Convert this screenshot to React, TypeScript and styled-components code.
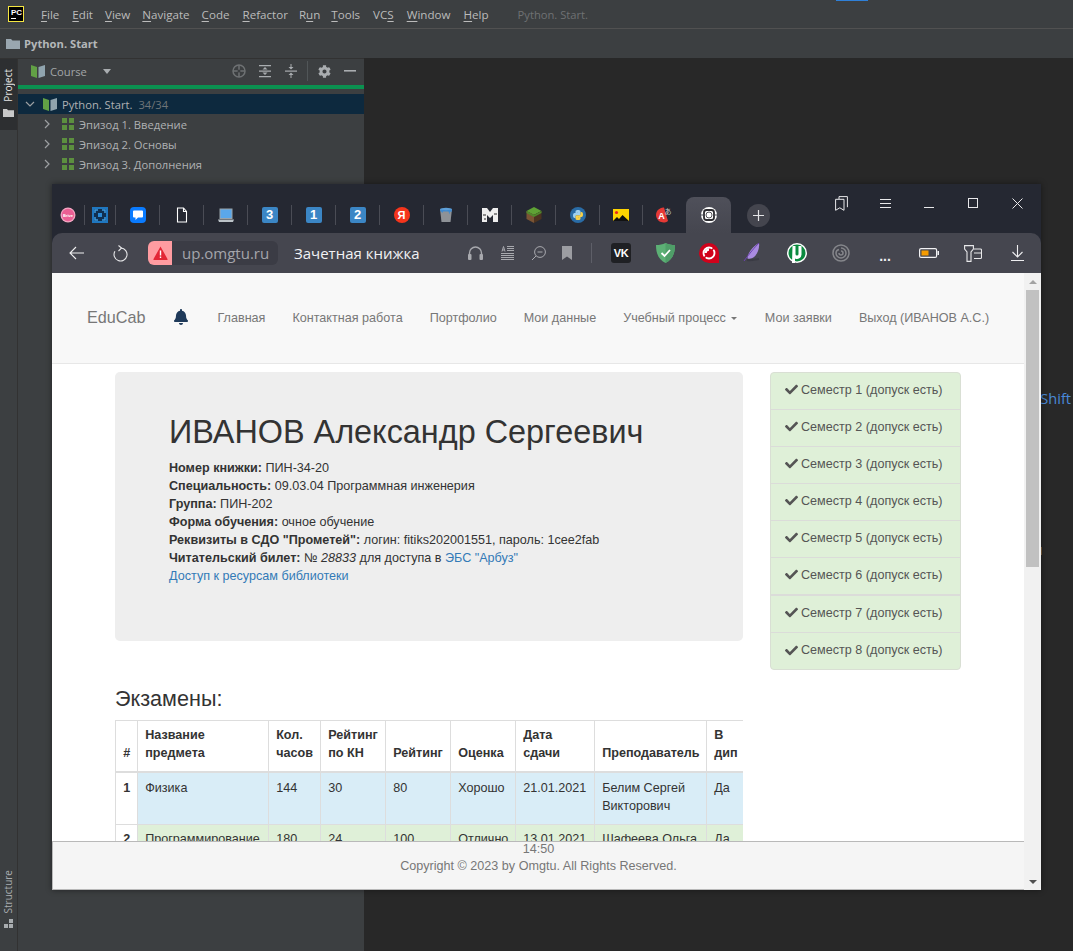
import React from 'react'
import styled, { createGlobalStyle } from 'styled-components'
import { FaBell, FaCheck, FaCog } from 'react-icons/fa'

const Global = createGlobalStyle`
  html, body { margin: 0; padding: 0; background: #2b2b2b; overflow: hidden; }
  * { box-sizing: border-box; }
`

/* ---------- IDE ---------- */
const Desktop = styled.div`
  position: relative;
  width: 1073px;
  height: 951px;
  overflow: hidden;
  display: flex;
  flex-direction: column;
  background: #3c3f41;
  font-family: 'Open Sans', 'Noto Sans', sans-serif;
  color: #bbbbbb;
`
const MenuBar = styled.div`
  position: relative;
  height: 29px;
  flex: none;
  display: flex;
  align-items: center;
  padding-left: 8px;
  border-bottom: 1px solid #515151;
  font-size: 11.6px;
`
const TopAccent = styled.div`
  position: absolute;
  left: 836px;
  top: 0;
  width: 32px;
  height: 1px;
  background: #2f80d8;
`
const PcLogo = styled.div`
  width: 16px;
  height: 16px;
  margin-right: 17px;
  border: 1px solid #f5e642;
  background: #000;
  color: #fff;
  font: 700 8px/9px 'Liberation Sans', sans-serif;
  padding: 1px 0 0 2px;
  &::after {
    content: '';
    display: block;
    width: 5px;
    height: 1px;
    margin-top: 1px;
    background: #fff;
  }
`
const MenuItem = styled.span`
  margin-right: ${(p: { $gap: number }) => p.$gap}px;
  u { text-underline-offset: 2px; }
`
const MenuTitle = styled.span`
  margin-left: 17px;
  font-size: 11.2px;
  color: #6f7173;
`
const NavBar = styled.div`
  height: 29px;
  flex: none;
  display: flex;
  align-items: center;
  gap: 4px;
  padding-left: 6px;
  font-size: 11.2px;
  font-weight: 700;
  color: #b4b7b9;
`
const Workspace = styled.div`
  flex: 1;
  display: flex;
  min-height: 0;
`
const Strip = styled.div`
  width: 18px;
  flex: none;
  display: flex;
  flex-direction: column;
  align-items: stretch;
  border-right: 1px solid #323232;
  border-top: 1px solid #323232;
`
const StripTab = styled.div`
  height: ${(p: { $active?: boolean }) => (p.$active ? '71px' : 'auto')};
  margin-top: ${(p: { $active?: boolean }) => (p.$active ? '0' : 'auto')};
  padding: ${(p: { $active?: boolean }) => (p.$active ? '10px 0 0' : '0 0 22px')};
  background: ${(p: { $active?: boolean }) => (p.$active ? '#2d2f31' : 'transparent')};
  color: ${(p: { $active?: boolean }) => (p.$active ? '#e6e6e6' : '#a9adb0')};
  display: flex;
  flex-direction: column;
  align-items: center;
  gap: 6px;
  font-size: 10px;
  line-height: 17px;
`
const VerticalText = styled.span`
  writing-mode: vertical-rl;
  transform: rotate(180deg);
`
const Panel = styled.div`
  width: 346px;
  flex: none;
  display: flex;
  flex-direction: column;
  font-size: 11.2px;
`
const PanelHead = styled.div`
  height: 27px;
  flex: none;
  display: flex;
  align-items: center;
  padding: 0 1px 2px 13px;
  border-top: 1px solid #323232;
  color: #a3a6a8;
`
const PanelLabel = styled.span`
  margin-left: 5px;
`
const Caret = styled.span`
  width: 0;
  height: 0;
  margin-left: 16px;
  margin-right: auto;
  border-left: 4.5px solid transparent;
  border-right: 4.5px solid transparent;
  border-top: 5px solid #a9adb0;
`
const ToolIcon = styled.span`
  width: 26px;
  display: flex;
  justify-content: center;
  color: #a9adb0;
`
const ToolDivider = styled.span`
  width: 1px;
  height: 20px;
  margin: 0 3px;
  background: #515658;
`
const ProgressLine = styled.div`
  height: 4px;
  flex: none;
  background: #0b9150;
  margin-bottom: 5px;
`
const TreeRow = styled.div<{ $selected?: boolean; $level: number }>`
  height: 20px;
  flex: none;
  display: flex;
  align-items: center;
  padding-left: ${(p) => (p.$level ? 24 : 7)}px;
  gap: 5px;
  background: ${(p) => (p.$selected ? '#0d293e' : 'transparent')};
  color: #afb1b3;
`
const ChevronSlot = styled.span<{ $w: number }>`
  width: ${(p) => p.$w}px;
  flex: none;
`
const TreeCount = styled.span`
  margin-left: 1px;
  color: #6f7578;
`
const Editor = styled.div`
  flex: 1;
  display: flex;
  flex-direction: column;
  align-items: flex-end;
  background: #282828;
  padding: 331px 2px 0 0;
  font-size: 14.6px;
  line-height: 19px;
  color: #4a88d8;
`
const EditorMark = styled.span`
  width: 1px;
  height: 8px;
  margin: 139px 29px 0 0;
  background: #7a5c3a;
`

/* ---------- browser window ---------- */
const Browser = styled.div`
  position: absolute;
  left: 52px;
  top: 184px;
  width: 989px;
  height: 706px;
  display: flex;
  flex-direction: column;
  background: #252832;
  box-shadow: 0 0 6px rgba(0, 0, 0, 0.45);
`
const TabBar = styled.div`
  height: 49px;
  flex: none;
  display: flex;
  align-items: flex-end;
`
const TabRow = styled.div`
  height: 36px;
  display: flex;
  align-items: center;
`
const Tab = styled.div<{ $w?: number; $active?: boolean }>`
  position: relative;
  width: ${(p) => p.$w ?? 43}px;
  height: 36px;
  display: flex;
  align-items: center;
  justify-content: center;
  background: ${(p) => (p.$active ? 'linear-gradient(#4f505a, #45464f)' : 'transparent')};
  border-radius: ${(p) => (p.$active ? '8px 8px 0 0' : '0')};
`
const TabSep = styled.span`
  width: 1px;
  height: 20px;
  background: #4a4c55;
`
const TabGap = styled.span`
  width: 1px;
`
const NewTab = styled.div`
  width: 23px;
  height: 23px;
  margin-left: 16px;
  border-radius: 50%;
  background: #44454e;
  color: #e4e4e6;
  display: flex;
  align-items: center;
  justify-content: center;
`
const WindowControls = styled.div`
  margin-left: auto;
  margin-right: 2px;
  align-self: flex-start;
  height: 38px;
  display: flex;
  align-items: center;
`
const WinButton = styled.div`
  width: 44px;
  display: flex;
  justify-content: center;
  color: #e8e8ea;
`
const AddressBar = styled.div`
  height: 40px;
  flex: none;
  display: flex;
  align-items: center;
  padding: 0 2px;
  background: #45464f;
  border-radius: 10px 10px 0 0;
  color: #f0f0f2;
`
const ToolButton = styled.div<{ $w?: number }>`
  width: ${(p) => p.$w ?? 44}px;
  flex: none;
  display: flex;
  align-items: center;
  justify-content: center;
`
const WarnTile = styled.div`
  width: 24px;
  height: 24px;
  margin-left: 6px;
  flex: none;
  display: flex;
  align-items: center;
  justify-content: center;
  background: #ff9ca1;
  border-radius: 6px 0 0 6px;
`
const DomainPill = styled.div`
  width: 106px;
  height: 24px;
  padding-left: 10px;
  flex: none;
  background: #3b3c45;
  border-radius: 0 6px 6px 0;
  color: #a4a5ab;
  font: 15px/24px 'Open Sans', sans-serif;
`
const PageTitle = styled.div`
  margin-left: 16px;
  margin-right: auto;
  font: 15px/24px 'Open Sans', sans-serif;
  color: #f2f2f4;
`
const AddrSep = styled.span`
  width: 1px;
  height: 20px;
  margin: 0 7px 0 11px;
  background: #5e5f68;
`
const Dots = styled.span`
  color: #f0f0f2;
  font: 700 14px/1 'Liberation Sans', sans-serif;
  padding-top: 6px;
`

/* ---------- favicons made of text ---------- */
const NumberTile = styled.span`
  width: 16px;
  height: 16px;
  border-radius: 2px;
  background: #3b86c5;
  color: #fff;
  text-align: center;
  font: 700 13px/16px 'Liberation Sans', sans-serif;
`
const YandexBadge = styled.span`
  width: 16px;
  height: 16px;
  border-radius: 50%;
  background: #f5351c;
  color: #fff;
  text-align: center;
  font: 700 11px/16px 'Liberation Sans', sans-serif;
`
const VkTile = styled.span`
  width: 20px;
  height: 20px;
  border-radius: 3px;
  background: #1f2024;
  color: #fff;
  text-align: center;
  font: 900 11px/20px 'Liberation Sans', sans-serif;
  letter-spacing: -0.5px;
`

/* ---------- web page ---------- */
const Page = styled.div`
  flex: 1;
  min-height: 0;
  display: flex;
  background: #fff;
`
const Viewport = styled.div`
  position: relative;
  flex: 1;
  min-width: 0;
  overflow: hidden;
  font: 12.6px/18px 'Liberation Sans', Arial, sans-serif;
  color: #333;
`
const Scrollbar = styled.div`
  width: 17px;
  flex: none;
  display: flex;
  flex-direction: column;
  align-items: center;
  background: #f1f1f1;
`
const ScrollArrow = styled.span<{ $down?: boolean }>`
  width: 17px;
  height: 17px;
  flex: none;
  display: flex;
  align-items: center;
  justify-content: center;
  &::before {
    content: '';
    border-left: 4px solid transparent;
    border-right: 4px solid transparent;
    ${(p) => (p.$down ? 'border-top: 4px solid #505050;' : 'border-bottom: 4px solid #a3a3a3;')}
  }
`
const ScrollThumb = styled.span`
  width: 13px;
  height: 277px;
  margin-bottom: auto;
  background: #c1c1c1;
`
const TopNav = styled.nav`
  height: 91px;
  display: flex;
  align-items: center;
  padding-left: 35px;
  padding-bottom: 2px;
  background: #f8f8f8;
  border-bottom: 1px solid #e7e7e7;
  color: #777;
`
const Brand = styled.span`
  font-size: 16.2px;
  margin-right: 27px;
`
const BellWrap = styled.span`
  display: flex;
  color: #1f3a5a;
  margin-right: 29px;
`
const NavLink = styled.span<{ $gap?: number }>`
  margin-right: ${(p) => p.$gap ?? 27}px;
  padding-top: 2px;
  white-space: nowrap;
`
const DropCaret = styled.span`
  display: inline-block;
  margin-left: 5px;
  vertical-align: middle;
  border-left: 3.6px solid transparent;
  border-right: 3.6px solid transparent;
  border-top: 3.6px solid #777;
`
const Main = styled.div`
  display: grid;
  grid-template-columns: 628px 191px;
  column-gap: 27px;
  align-items: start;
  padding: 8px 0 0 63px;
`
const LeftColumn = styled.div`
  min-width: 0;
`
const Jumbotron = styled.section`
  height: 269px;
  padding: 42px 54px 0;
  background: #eee;
  border-radius: 5px;
`
const StudentName = styled.h1`
  margin: 0 0 9px;
  font-size: 32.4px;
  line-height: 36px;
  font-weight: 400;
`
const InfoLine = styled.div`
  white-space: nowrap;
`
const Link = styled.a`
  color: #337ab7;
`
const SemesterList = styled.ul`
  height: 298px;
  margin: 0;
  padding: 0;
  list-style: none;
  border: 1px solid #d9dfd4;
  border-radius: 4px;
  background: #dff0d8;
  overflow: hidden;
`
const SemesterItem = styled.li<{ $thick?: boolean }>`
  height: ${(p) => (p.$thick ? 38 : 37)}px;
  display: flex;
  align-items: center;
  gap: 3px;
  padding-left: 14px;
  padding-bottom: 3px;
  color: #555;
  border-bottom: ${(p) => (p.$thick ? 2 : 1)}px solid #dbdcd9;
  &:last-child { border-bottom: 0; }
`
const SectionTitle = styled.h3`
  margin: 46px 0 9px;
  font-size: 21.6px;
  line-height: 24px;
  font-weight: 400;
`
const TableWrap = styled.div`
  overflow: hidden;
`
const ExamTable = styled.table`
  width: 660px;
  table-layout: fixed;
  border-collapse: collapse;
  th, td {
    padding: 5.2px 7.2px 9.2px;
    text-align: left;
    border: 1px solid #ddd;
    vertical-align: top;
  }
  th { vertical-align: bottom; border-bottom-width: 2px; }
`
const Row = styled.tr<{ $tone: string }>`
  td { background: ${(p) => p.$tone}; }
  td:first-child { background: #fff; font-weight: 700; }
`
const PageFooter = styled.footer`
  position: absolute;
  left: 0;
  right: 0;
  bottom: 0;
  height: 49px;
  overflow: hidden;
  background: #f5f5f5;
  border: 1px solid #b9b9b9;
  border-right: 0;
  color: #777;
  text-align: center;
  line-height: 17px;
`
const FooterTime = styled.div`
  margin-top: -1px;
`

/* ---------- drawn icons ---------- */
const Svg = ({ s = 16, w, h, vb, children }: { s?: number; w?: number; h?: number; vb?: string; children: React.ReactNode }) => (
  <svg width={w ?? s} height={h ?? s} viewBox={vb ?? `0 0 ${w ?? s} ${h ?? s}`} fill="none" style={{ display: 'block', flex: 'none' }}>
    {children}
  </svg>
)
const Book = () => (
  <Svg w={14} h={13}>
    <path d="M0 0l6 2v11L0 11z" fill="#62a045" />
    <path d="M7.500 2L14 0v11l-6.500 2z" fill="#90a4ae" />
  </Svg>
)
const FolderIcon = ({ c = '#9aa7b0', w = 14 }: { c?: string; w?: number }) => (
  <Svg w={w} h={10} vb="0 0 14 10">
    <path d="M0 0h5l1.500 1.500H14V10H0z" fill={c} />
  </Svg>
)
const Chevron = ({ down }: { down?: boolean }) => (
  <Svg s={10}>
    <path d={down ? 'M1 3l4 4 4-4' : 'M3 1l4 4-4 4'} stroke="#9da0a2" strokeWidth="1.200" />
  </Svg>
)
const GroupGrid = () => (
  <Svg s={12}>
    <path d="M0 0h5v5H0zM7 0h5v5H7zM0 7h5v5H0zM7 7h5v5H7z" fill="#5c8f3f" />
  </Svg>
)
const TargetIcon = () => (
  <Svg s={14}>
    <circle cx="7" cy="7" r="6" stroke="#6e7173" strokeWidth="1.500" />
    <path d="M7 1v12M1 7h12" stroke="#6e7173" strokeWidth="1.500" />
    <circle cx="7" cy="7" r="1.500" fill="#3c3f41" />
  </Svg>
)
const ExpandIcon = () => (
  <Svg s={14}>
    <path d="M1 1h12v1.300H1zM1 12h12v1.300H1zM1 6.500h12v1.200H1z" fill="#a9adb0" />
    <path d="M7 3l2.500 2.500h-5zM7 11L4.500 8.500h5z" fill="#a9adb0" />
  </Svg>
)
const CollapseIcon = () => (
  <Svg s={14}>
    <path d="M1 6.500h12v1.200H1z" fill="#a9adb0" />
    <path d="M7 5.500L4.500 3h5zM7 8.500l2.500 2.500h-5z" fill="#a9adb0" />
    <path d="M6.500 0h1v3h-1zM6.500 11h1v3h-1z" fill="#a9adb0" />
  </Svg>
)
const MinusIcon = () => (
  <Svg s={12}>
    <path d="M0 5h12v1.600H0z" fill="#a9adb0" />
  </Svg>
)
const StructureIcon = () => (
  <Svg s={10}>
    <path d="M5 0h4v4H5zM0 5h4v4H0zM5 5h4v4H5z" fill="#a9adb0" />
  </Svg>
)

const PinkBadge = () => (
  <Svg s={16}>
    <circle cx="8" cy="8" r="7.500" fill="#f2a6c2" />
    <circle cx="8" cy="8" r="6.200" fill="#ea5f94" />
    <text x="8" y="9.500" textAnchor="middle" fontSize="4" fontFamily="Liberation Sans" fontWeight="700" fill="#fff">Brive</text>
  </Svg>
)
const FrameFavicon = () => (
  <Svg s={16}>
    <rect width="16" height="16" fill="#1f77c0" />
    <rect x="2" y="2" width="12" height="12" fill="#103052" />
    <path d="M3 6V3h3M10 3h3v3M13 10v3h-3M6 13H3v-3" stroke="#3d9be0" strokeWidth="1.500" />
    <rect x="6" y="6" width="4" height="4" fill="#2b8ad6" />
  </Svg>
)
const ChatFavicon = () => (
  <Svg s={16}>
    <rect width="16" height="16" rx="4" fill="#0a7bff" />
    <path d="M4 3.500h8a1 1 0 011 1v5a1 1 0 01-1 1H8l-2.500 2.500v-2.500H4a1 1 0 01-1-1v-5a1 1 0 011-1z" fill="#fff" />
  </Svg>
)
const DocFavicon = () => (
  <Svg s={16}>
    <path d="M3.500 1h6l3 3.500V15h-9z" stroke="#fff" strokeWidth="1.100" fill="#252832" />
    <path d="M9.500 1v3.500h3" stroke="#fff" strokeWidth="1.100" />
  </Svg>
)
const LaptopFavicon = () => (
  <Svg s={16}>
    <rect x="2" y="2" width="12" height="9.500" fill="#5aa7ea" stroke="#9aa3a9" />
    <path d="M0 12.500h16L15 15H1z" fill="#bcc3c8" />
  </Svg>
)
const BucketFavicon = () => (
  <Svg s={16}>
    <path d="M2 2h12l-1.500 13h-9z" fill="#8e9297" />
    <path d="M2 2h12l-.5 3-1.500-.5-.5 3-1-3L5 4.500 4.500 6 3 4.500 2.300 4z" fill="#3f8ad0" />
    <ellipse cx="8" cy="2" rx="6" ry="1.200" fill="#5e9fd8" />
  </Svg>
)
const BlockLetterFavicon = () => (
  <Svg s={16}>
    <path d="M0 1h5l3 4 3-4h5v14h-5V8L8 11 5 8v7H0z" fill="#eeeeee" />
    <path d="M1 7h3v2H1zM2 11h2v2H2zM12 6h3v2h-3z" fill="#8a8a8a" />
  </Svg>
)
const CubeFavicon = () => (
  <Svg s={16}>
    <path d="M8 0l7.500 4L8 8 .5 4z" fill="#5fa235" />
    <path d="M.5 4L8 8v8l-7.500-4z" fill="#7a5434" />
    <path d="M15.500 4L8 8v8l7.500-4z" fill="#4c3320" />
    <path d="M.5 4L8 8l7.500-4v2L8 10 .5 6z" fill="#4f8a2b" />
  </Svg>
)
const PythonFavicon = () => (
  <Svg s={16}>
    <circle cx="8" cy="8" r="8" fill="#2a6ca6" />
    <path d="M5.500 7.500V4.500c0-1 1-1.500 2.500-1.500s2.500.5 2.500 1.500V7c0 .6-.5 1-1 1H7c-1 0-1.500.6-1.500 1.500V11H4.500C3.500 11 3 10 3 8.500S3.500 6 4.500 6H8V5.500" fill="#9fd0ef" />
    <path d="M10.500 8.500v3c0 1-1 1.500-2.500 1.500s-2.500-.5-2.500-1.500V9.500C5.500 8.700 6 8.300 6.500 8.300H9c1 0 1.500-.6 1.500-1.500V5h1c1 0 1.500 1 1.500 2.500S12.500 10 11.500 10H8v.5" fill="#f7d04a" />
  </Svg>
)
const ImageFavicon = () => (
  <Svg w={16} h={12}>
    <rect width="16" height="12" fill="#ffd400" />
    <path d="M0 12l4-4 2 2 3.500-4 6.500 6z" fill="#111" />
    <circle cx="3.500" cy="3.500" r="1.600" fill="#e8281d" />
  </Svg>
)
const TranslateFavicon = () => (
  <Svg s={16}>
    <path d="M8 .5L12 14a7.500 7.500 0 11-4-13.500z" fill="#e53935" />
    <text x="5.500" y="12" textAnchor="middle" fontSize="9" fontFamily="Liberation Sans" fontWeight="700" fill="#fff">A</text>
    <text x="12" y="7" textAnchor="middle" fontSize="7" fontFamily="Noto Sans CJK JP" fill="#cfcfcf">あ</text>
  </Svg>
)
const RingFavicon = () => (
  <Svg s={16}>
    <circle cx="8" cy="8" r="8" fill="#fff" />
    <rect x="3" y="3" width="10" height="10" rx="2.500" stroke="#2c2c30" strokeWidth="1.800" />
    <circle cx="8" cy="8" r="3" fill="#fff" stroke="#55555a" />
    <path d="M0 8h3M13 8h3" stroke="#45464f" strokeWidth="1" />
  </Svg>
)
const PlusIcon = () => (
  <Svg s={11}>
    <path d="M5.500 0v11M0 5.500h11" stroke="currentColor" strokeWidth="1.200" />
  </Svg>
)
const BookmarksIcon = () => (
  <Svg w={13} h={15}>
    <path d="M4 3V.6h8.400v10.600" stroke="currentColor" />
    <path d="M.6 3.300h8.400V14.300L4.800 11.800.6 14.300z" stroke="currentColor" />
  </Svg>
)
const BurgerIcon = () => (
  <Svg w={11} h={9}>
    <path d="M0 .5h11M0 4.500h11M0 8.500h11" stroke="currentColor" />
  </Svg>
)
const MinimizeIcon = () => (
  <Svg w={10} h={10}>
    <path d="M0 9.500h10" stroke="currentColor" />
  </Svg>
)
const MaximizeIcon = () => (
  <Svg w={10} h={10}>
    <rect x=".5" y=".5" width="9" height="9" stroke="currentColor" />
  </Svg>
)
const CloseIcon = () => (
  <Svg w={11} h={11}>
    <path d="M.5.5l10 10M10.500.5l-10 10" stroke="currentColor" />
  </Svg>
)
const BackIcon = () => (
  <Svg w={15} h={14}>
    <path d="M15 7H1M7 1L1 7l6 6" stroke="#f0f0f2" strokeWidth="1.100" />
  </Svg>
)
const ReloadIcon = () => (
  <Svg w={15} h={17}>
    <path d="M8 3A6.500 6.500 0 1 1 1.900 6.250" stroke="#e6e6e8" strokeWidth="1.100" />
    <path d="M5.500.5L8.500 3l-3 3" stroke="#e6e6e8" strokeWidth="1.100" />
  </Svg>
)
const WarnIcon = () => (
  <Svg w={15} h={14}>
    <path d="M7.500.5l7 12.500a.6.6 0 01-.5.9H1a.6.6 0 01-.5-.9z" fill="#e32636" />
    <path d="M6.800 4.500h1.400v5H6.800zM6.800 10.500h1.400V12H6.800z" fill="#fff" />
  </Svg>
)
const HeadphonesIcon = () => (
  <Svg w={15} h={14}>
    <path d="M1.500 9V7a6 6 0 0112 0v2" stroke="#a8a9ae" strokeWidth="1.400" />
    <rect x="0" y="8" width="3.500" height="6" rx="1" fill="#a8a9ae" />
    <rect x="11.500" y="8" width="3.500" height="6" rx="1" fill="#a8a9ae" />
  </Svg>
)
const ReaderIcon = () => (
  <Svg w={13} h={14}>
    <path d="M1 5.500l1.500-5 1.500 5M1.500 4h2M6 .5h7M6 2.500h7M6 4.500h7M0 7.500h13M0 9.500h13M0 11.500h13M0 13.500h13" stroke="#a8a9ae" />
  </Svg>
)
const ZoomOutIcon = () => (
  <Svg s={15}>
    <circle cx="9" cy="6" r="5.400" stroke="#a8a9ae" />
    <path d="M6.500 6h5M5 10L1 14" stroke="#a8a9ae" />
  </Svg>
)
const BookmarkIcon = () => (
  <Svg w={10} h={14}>
    <path d="M0 0h10v14L5 10.500 0 14z" fill="#9c9da2" />
  </Svg>
)
const ShieldIcon = () => (
  <Svg w={19} h={20}>
    <path d="M9.500 0c3 1.500 6 2 9.500 2 0 8-2 14-9.500 18C2 16 0 10 0 2c3.500 0 6.500-.5 9.500-2z" fill="#5cb075" />
    <path d="M9.500 0c3 1.500 6 2 9.500 2 0 8-2 14-9.500 18z" fill="#4f9e68" />
    <path d="M5.500 10l3 3 5.500-6" stroke="#fff" strokeWidth="1.800" />
  </Svg>
)
const RedPinIcon = () => (
  <Svg s={20}>
    <path d="M10 0a10 10 0 0110 10v10H10A10 10 0 1110 0z" fill="#d0021b" />
    <circle cx="10" cy="10" r="5.500" stroke="#fff" strokeWidth="1.800" />
    <path d="M5 15L15 5" stroke="#d0021b" strokeWidth="1.500" />
    <path d="M6.500 10a3.500 3.500 0 013.500-3.500" stroke="#fff" strokeWidth="2.500" />
  </Svg>
)
const FeatherIcon = () => (
  <Svg s={20}>
    <path d="M16 0c.8 5-1.500 11-5 14-2 1.700-4.500 2-6.500 1.500C4 11 10 3 16 0z" fill="#a98be0" />
    <path d="M16 0C11 5 7 10 1 18" stroke="#6d44b0" />
    <path d="M4 17c4 1 8-.5 12-1" stroke="#3a3b44" strokeWidth="2" />
  </Svg>
)
const TorrentIcon = () => (
  <Svg s={20}>
    <circle cx="10" cy="10" r="10" fill="#fff" />
    <circle cx="10" cy="10" r="8.500" fill="#0b8a3f" />
    <path d="M5.500 3h3v8a1.500 1.500 0 003 0V3h3v8.500a4.500 4.500 0 01-6.500 4V20h-3z" fill="#fff" />
  </Svg>
)
const SpiralIcon = () => (
  <Svg s={18}>
    <circle cx="9" cy="9" r="8" stroke="#85868b" strokeWidth="1.500" />
    <path d="M9 4a5 5 0 11-5 5c0-2 1-3 3-3.500M9 7a2 2 0 11-2 2" stroke="#85868b" strokeWidth="1.500" />
  </Svg>
)
const BatteryIcon = () => (
  <Svg w={20} h={10}>
    <rect x=".6" y=".6" width="17" height="8.800" rx="1.500" stroke="#f2f2f4" strokeWidth="1.200" />
    <rect x="2.500" y="2.500" width="7" height="5" fill="#f59b00" />
    <rect x="18.500" y="3" width="1.500" height="4" fill="#f2f2f4" />
  </Svg>
)
const PanelsIcon = () => (
  <Svg w={18} h={17}>
    <path d="M.6.6h8.800v3.400L7 7v9.400H3V7L.6 4z" stroke="#e8e8ea" strokeWidth="1.100" />
    <path d="M10 4h6.500a1 1 0 011 1v7.500a1 1 0 01-1 1H10M10 8h7.500" stroke="#e8e8ea" strokeWidth="1.100" />
  </Svg>
)
const DownloadIcon = () => (
  <Svg w={13} h={16}>
    <path d="M6.500 0v12M1.500 7l5 5 5-5M0 15.500h13" stroke="#eeeeF0" strokeWidth="1.100" />
  </Svg>
)

const menu: [string, string, string, number][] = [
  ['', 'F', 'ile', 13],
  ['', 'E', 'dit', 12],
  ['', 'V', 'iew', 12],
  ['', 'N', 'avigate', 12],
  ['', 'C', 'ode', 13],
  ['', 'R', 'efactor', 11],
  ['R', 'u', 'n', 11],
  ['', 'T', 'ools', 13],
  ['VC', 'S', '', 13],
  ['', 'W', 'indow', 13],
  ['', 'H', 'elp', 12],
]

const tabs: { icon: React.ReactNode; w?: number }[] = [
  { icon: <PinkBadge />, w: 32 },
  { icon: <FrameFavicon />, w: 30 },
  { icon: <ChatFavicon /> },
  { icon: <DocFavicon /> },
  { icon: <LaptopFavicon /> },
  { icon: <NumberTile>3</NumberTile> },
  { icon: <NumberTile>1</NumberTile> },
  { icon: <NumberTile>2</NumberTile> },
  { icon: <YandexBadge>Я</YandexBadge> },
  { icon: <BucketFavicon /> },
  { icon: <BlockLetterFavicon /> },
  { icon: <CubeFavicon /> },
  { icon: <PythonFavicon /> },
  { icon: <ImageFavicon />, w: 42 },
  { icon: <TranslateFavicon />, w: 42 },
]

const navLinks = ['Главная', 'Контактная работа', 'Портфолио', 'Мои данные']
const semesters = [1, 2, 3, 4, 5, 6, 7, 8]
const columns = [22, 131, 52, 65, 65, 65, 79, 112, 69]
const exams = [
  ['1', 'Физика', '144', '30', '80', 'Хорошо', '21.01.2021', 'Белим Сергей Викторович', 'Да'],
  ['2', 'Программирование', '180', '24', '100', 'Отлично', '13.01.2021', 'Шафеева Ольга Николаевна', 'Да'],
]

const App = () => (
  <>
    <Global />
    <Desktop>
      <MenuBar>
        <TopAccent />
        <PcLogo>PC</PcLogo>
        {menu.map(([before, key, after, gap]) => (
          <MenuItem key={before + key + after} $gap={gap}>
            {before}
            <u>{key}</u>
            {after}
          </MenuItem>
        ))}
        <MenuTitle>Python. Start.</MenuTitle>
      </MenuBar>
      <NavBar>
        <FolderIcon />
        Python. Start
      </NavBar>
      <Workspace>
        <Strip>
          <StripTab $active>
            <VerticalText>Project</VerticalText>
            <FolderIcon c="#c9c9c9" w={11} />
          </StripTab>
          <StripTab>
            <VerticalText>Structure</VerticalText>
            <StructureIcon />
          </StripTab>
        </Strip>
        <Panel>
          <PanelHead>
            <Book />
            <PanelLabel>Course</PanelLabel>
            <Caret />
            <ToolIcon><TargetIcon /></ToolIcon>
            <ToolIcon><ExpandIcon /></ToolIcon>
            <ToolIcon><CollapseIcon /></ToolIcon>
            <ToolDivider />
            <ToolIcon><FaCog size={13} /></ToolIcon>
            <ToolIcon><MinusIcon /></ToolIcon>
          </PanelHead>
          <ProgressLine />
          <TreeRow $selected $level={0}>
            <ChevronSlot $w={13}><Chevron down /></ChevronSlot>
            <Book />
            <span>Python. Start.</span>
            <TreeCount>34/34</TreeCount>
          </TreeRow>
          {['Эпизод 1. Введение', 'Эпизод 2. Основы', 'Эпизод 3. Дополнения'].map((t) => (
            <TreeRow key={t} $level={1}>
              <ChevronSlot $w={15}><Chevron /></ChevronSlot>
              <GroupGrid />
              <span>{t}</span>
            </TreeRow>
          ))}
        </Panel>
        <Editor>
          <span>Shift</span>
          <EditorMark />
        </Editor>
      </Workspace>

      <Browser>
        <TabBar>
          <TabRow>
            {tabs.map((t, i) => (
              <React.Fragment key={i}>
                <Tab $w={t.w}>{t.icon}</Tab>
                {i < tabs.length - 1 ? <TabSep /> : <TabGap />}
              </React.Fragment>
            ))}
            <Tab $w={45} $active><RingFavicon /></Tab>
            <NewTab><PlusIcon /></NewTab>
          </TabRow>
          <WindowControls>
            <WinButton><BookmarksIcon /></WinButton>
            <WinButton><BurgerIcon /></WinButton>
            <WinButton><MinimizeIcon /></WinButton>
            <WinButton><MaximizeIcon /></WinButton>
            <WinButton><CloseIcon /></WinButton>
          </WindowControls>
        </TabBar>
        <AddressBar>
          <ToolButton><BackIcon /></ToolButton>
          <ToolButton><ReloadIcon /></ToolButton>
          <WarnTile><WarnIcon /></WarnTile>
          <DomainPill>up.omgtu.ru</DomainPill>
          <PageTitle>Зачетная книжка</PageTitle>
          <ToolButton $w={32}><HeadphonesIcon /></ToolButton>
          <ToolButton $w={32}><ReaderIcon /></ToolButton>
          <ToolButton $w={31}><ZoomOutIcon /></ToolButton>
          <ToolButton $w={26}><BookmarkIcon /></ToolButton>
          <AddrSep />
          <ToolButton><VkTile>VK</VkTile></ToolButton>
          <ToolButton><ShieldIcon /></ToolButton>
          <ToolButton><RedPinIcon /></ToolButton>
          <ToolButton><FeatherIcon /></ToolButton>
          <ToolButton><TorrentIcon /></ToolButton>
          <ToolButton><SpiralIcon /></ToolButton>
          <ToolButton><Dots>...</Dots></ToolButton>
          <ToolButton><BatteryIcon /></ToolButton>
          <ToolButton><PanelsIcon /></ToolButton>
          <ToolButton><DownloadIcon /></ToolButton>
        </AddressBar>
        <Page>
          <Viewport>
            <TopNav>
              <Brand>EduCab</Brand>
              <BellWrap><FaBell size={16} /></BellWrap>
              {navLinks.map((l) => (
                <NavLink key={l}>{l}</NavLink>
              ))}
              <NavLink $gap={28}>Учебный процесс<DropCaret /></NavLink>
              <NavLink>Мои заявки</NavLink>
              <NavLink>Выход (ИВАНОВ А.С.)</NavLink>
            </TopNav>
            <Main>
              <LeftColumn>
                <Jumbotron>
                  <StudentName>ИВАНОВ Александр Сергеевич</StudentName>
                  <InfoLine><b>Номер книжки:</b> ПИН-34-20</InfoLine>
                  <InfoLine><b>Специальность:</b> 09.03.04 Программная инженерия</InfoLine>
                  <InfoLine><b>Группа:</b> ПИН-202</InfoLine>
                  <InfoLine><b>Форма обучения:</b> очное обучение</InfoLine>
                  <InfoLine><b>Реквизиты в СДО "Прометей":</b> логин: fitiks202001551, пароль: 1cee2fab</InfoLine>
                  <InfoLine><b>Читательский билет:</b> № <i>28833</i> для доступа в <Link>ЭБС "Арбуз"</Link></InfoLine>
                  <InfoLine><Link>Доступ к ресурсам библиотеки</Link></InfoLine>
                </Jumbotron>
                <SectionTitle>Экзамены:</SectionTitle>
                <TableWrap>
                  <ExamTable>
                    <colgroup>
                      {columns.map((w, i) => (
                        <col key={i} width={w} />
                      ))}
                    </colgroup>
                    <thead>
                      <tr>
                        <th>#</th>
                        <th>Название предмета</th>
                        <th>Кол. часов</th>
                        <th>Рейтинг по КН</th>
                        <th>Рейтинг</th>
                        <th>Оценка</th>
                        <th>Дата сдачи</th>
                        <th>Преподаватель</th>
                        <th>В<br />дип</th>
                      </tr>
                    </thead>
                    <tbody>
                      {exams.map((row, i) => (
                        <Row key={row[0]} $tone={i === 0 ? '#d9edf7' : '#dff0d8'}>
                          {row.map((c, j) => (
                            <td key={j}>{c}</td>
                          ))}
                        </Row>
                      ))}
                    </tbody>
                  </ExamTable>
                </TableWrap>
              </LeftColumn>
              <SemesterList>
                {semesters.map((n) => (
                  <SemesterItem key={n} $thick={n === 6}>
                    <FaCheck size={13} />
                    Семестр {n} (допуск есть)
                  </SemesterItem>
                ))}
              </SemesterList>
            </Main>
            <PageFooter>
              <FooterTime>14:50</FooterTime>
              <div>Copyright © 2023 by Omgtu. All Rights Reserved.</div>
            </PageFooter>
          </Viewport>
          <Scrollbar>
            <ScrollArrow />
            <ScrollThumb />
            <ScrollArrow $down />
          </Scrollbar>
        </Page>
      </Browser>
    </Desktop>
  </>
)

export default App
